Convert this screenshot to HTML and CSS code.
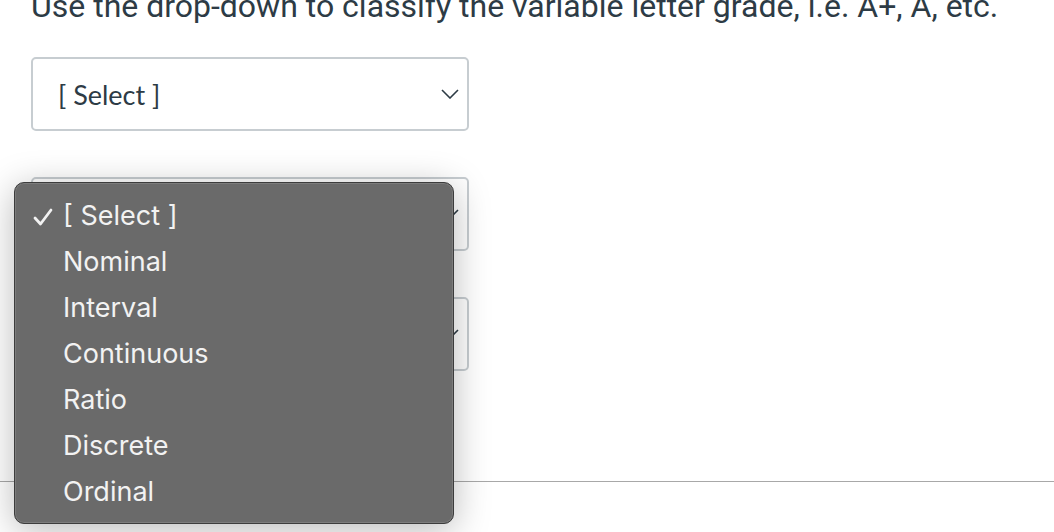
FILE: index.html
```html
<!DOCTYPE html>
<html lang="en">
<head>
    <meta charset="UTF-8">
    <title>Question</title>
    <link rel="stylesheet" href="styles.css">
</head>
<body>
    <div class="question">
        <p class="prompt">Use the drop-down to classify the variable letter grade, i.e. A+, A, etc.</p>
        <div class="picker">
            <span>[ Select ]</span>
            <svg class="chev" width="18" height="10" viewBox="0 0 18 10"><path d="M1 1l8 8 8-8" fill="none" stroke="#2d3b45" stroke-width="1.6"/></svg>
        </div>
        <div class="picker">
            <span>[ Select ]</span>
            <svg class="chev" width="18" height="10" viewBox="0 0 18 10"><path d="M1 1l8 8 8-8" fill="none" stroke="#2d3b45" stroke-width="1.6"/></svg>
        </div>
        <div class="picker">
            <span>[ Select ]</span>
            <svg class="chev" width="18" height="10" viewBox="0 0 18 10"><path d="M1 1l8 8 8-8" fill="none" stroke="#2d3b45" stroke-width="1.6"/></svg>
        </div>
    </div>
    <div class="rule"></div>

    <ul class="menu">
        <li class="checked">
            <svg class="tick" width="20" height="18" viewBox="0 0 20 18"><path d="M2 10l5.5 6L18 2" fill="none" stroke="#f2f2f2" stroke-width="2.8" stroke-linecap="round" stroke-linejoin="round"/></svg>
            [ Select ]
        </li>
        <li>Nominal</li>
        <li>Interval</li>
        <li>Continuous</li>
        <li>Ratio</li>
        <li>Discrete</li>
        <li>Ordinal</li>
    </ul>
</body>
</html>
```

FILE: styles.css
```css
*{
    margin: 0;
    padding: 0;
    box-sizing: border-box;
}
body{
    background: #fff;
    font-family: Lato, "Liberation Sans", sans-serif;
    color: #2d3b45;
    overflow: hidden;
    height: 532px;
}
.question{
    padding-left: 31px;
    margin-top: -12px;
}
.prompt{
    font-family: Roboto, "Liberation Sans", sans-serif;
    font-size: 32px;
    line-height: 36px;
    margin-bottom: 33px;
    white-space: nowrap;
}
.picker{
    width: 438px;
    height: 74px;
    border: 2px solid #c7cdd1;
    border-radius: 5px;
    display: flex;
    align-items: center;
    justify-content: space-between;
    padding: 0 8px 0 25px;
    font-size: 27px;
    margin-bottom: 46px;
}
.chev{
    display: block;
}
.rule{
    height: 1px;
    background: #a8a8a8;
    margin-top: 110px;
}

/* open native list */
.menu{
    position: absolute;
    left: 14px;
    top: 182px;
    width: 440px;
    height: 342px;
    list-style: none;
    background: #6a6a6a;
    border: 1px solid #3c3c3c;
    border-radius: 10px;
    box-shadow: 0 0 0 1px rgba(255, 255, 255, 0.12) inset, 0 6px 36px rgba(0, 0, 0, 0.28);
    padding: 10px 0 9px;
    font-family: Inter, "Noto Sans", sans-serif;
    font-size: 27px;
    color: #f2f2f2;
}
.menu li{
    height: 46px;
    line-height: 46px;
    padding-left: 48px;
    position: relative;
}
.tick{
    position: absolute;
    left: 18px;
    top: 15px;
}
```
